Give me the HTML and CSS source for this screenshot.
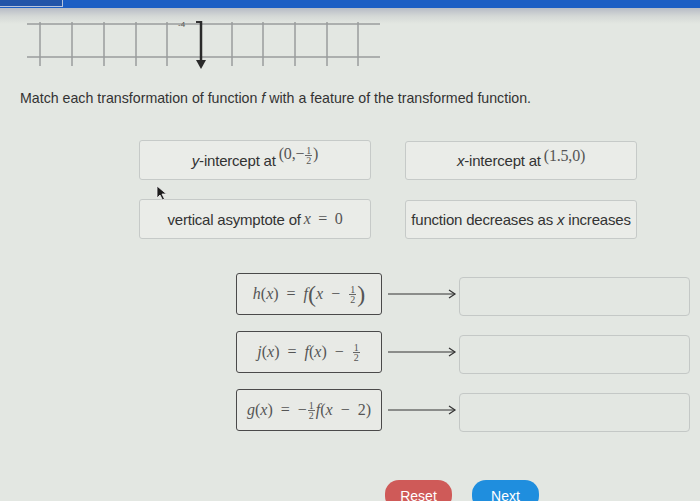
FILE: index.html
```html
<!DOCTYPE html>
<html>
<head>
    <title>Match transformations</title>
    <meta charset="utf-8">
    <meta name="viewport" content="width=device-width, initial-scale=1.0">
    <link rel="stylesheet" href="styles.css">
</head>
<body>

    <header class="topbar">
        <div class="tab"></div>
    </header>

    <div class="graph-area">
        <!-- part of the graph above the question, scrolled off -->
        <svg class="graph" width="400" height="50" viewBox="0 0 400 50">
            <g stroke="#9a9c9c" stroke-width="1.5">
                <line x1="27" y1="4" x2="380" y2="4"/>
                <line x1="27" y1="37" x2="380" y2="37"/>
                <line x1="40" y1="2" x2="40" y2="46"/>
                <line x1="72" y1="2" x2="72" y2="46"/>
                <line x1="104" y1="2" x2="104" y2="46"/>
                <line x1="136" y1="2" x2="136" y2="46"/>
                <line x1="167" y1="2" x2="167" y2="46"/>
                <line x1="232" y1="2" x2="232" y2="46"/>
                <line x1="263" y1="2" x2="263" y2="46"/>
                <line x1="295" y1="2" x2="295" y2="46"/>
                <line x1="327" y1="2" x2="327" y2="46"/>
                <line x1="358" y1="2" x2="358" y2="46"/>
            </g>
            <text x="178" y="7" font-size="8" fill="#555" font-family="Liberation Sans, sans-serif">-4</text>
            <line x1="196" y1="2" x2="201" y2="2" stroke="#333" stroke-width="2"/>
            <line x1="201" y1="1" x2="201" y2="42" stroke="#2a2a2a" stroke-width="2.5"/>
            <path d="M196 40 L201 49 L206 40 Z" fill="#2a2a2a"/>
        </svg>
    </div>

    <main class="question">
        <p class="prompt">Match each transformation of function <i>f</i> with a feature of the transformed function.</p>

        <section class="choices">
            <div class="card">
                <span><i>y</i>-intercept at</span>
                <span class="math tuple">(0,−<span class="frac"><span>1</span><span>2</span></span>)</span>
            </div>
            <div class="card">
                <span><i>x</i>-intercept at</span>
                <span class="math tuple">(1.5,0)</span>
            </div>
            <div class="card">
                <span>vertical asymptote of</span>
                <span class="math"><i>x</i>&nbsp; = &nbsp;0</span>
            </div>
            <div class="card">
                <span>function decreases as <i>x</i> increases</span>
            </div>
            <svg class="cursor" width="12" height="16" viewBox="0 0 12 16">
                <path d="M1 1 L1 13 L4 10 L6.5 15 L8.5 14 L6 9 L10.5 9 Z" fill="#1c1c1c" stroke="#f2f2f2" stroke-width="0.8"/>
            </svg>
        </section>

        <section class="matches">
            <div class="row">
                <div class="source math">
                    <i>h</i>(<i>x</i>)&nbsp; = &nbsp;<i>f</i><span class="big">(</span><i>x</i>&nbsp; − &nbsp;<span class="frac"><span>1</span><span>2</span></span><span class="big">)</span>
                </div>
                <svg class="link" width="70" height="12" viewBox="0 0 70 12">
                    <line x1="0" y1="6" x2="67" y2="6" stroke="#333" stroke-width="1"/>
                    <path d="M61 2 L67 6 L61 10" fill="none" stroke="#333" stroke-width="1.2"/>
                </svg>
                <div class="target"></div>
            </div>
            <div class="row">
                <div class="source math">
                    <i>j</i>(<i>x</i>)&nbsp; = &nbsp;<i>f</i>(<i>x</i>)&nbsp; − &nbsp;<span class="frac"><span>1</span><span>2</span></span>
                </div>
                <svg class="link" width="70" height="12" viewBox="0 0 70 12">
                    <line x1="0" y1="6" x2="67" y2="6" stroke="#333" stroke-width="1"/>
                    <path d="M61 2 L67 6 L61 10" fill="none" stroke="#333" stroke-width="1.2"/>
                </svg>
                <div class="target"></div>
            </div>
            <div class="row">
                <div class="source math">
                    <i>g</i>(<i>x</i>)&nbsp; = &nbsp;−<span class="frac"><span>1</span><span>2</span></span><i>f</i>(<i>x</i>&nbsp; − &nbsp;2)
                </div>
                <svg class="link" width="70" height="12" viewBox="0 0 70 12">
                    <line x1="0" y1="6" x2="67" y2="6" stroke="#333" stroke-width="1"/>
                    <path d="M61 2 L67 6 L61 10" fill="none" stroke="#333" stroke-width="1.2"/>
                </svg>
                <div class="target"></div>
            </div>
        </section>

        <div class="buttons">
            <button class="btn reset">Reset</button>
            <button class="btn next">Next</button>
        </div>
    </main>

</body>
</html>
```

FILE: styles.css
```css
* {
    box-sizing: border-box;
}

body {
    margin: 0;
    background-color: #e3e7e2;
    font-family: "Liberation Sans", Arial, sans-serif;
    color: #333;
    overflow: hidden;
}

.topbar {
    height: 8px;
    background-color: #1c5ec4;
}

.tab {
    width: 63px;
    height: 7px;
    background-color: #2254a8;
    border-right: 1px solid #b8c4dc;
    border-bottom: 1px solid #b8c4dc;
}

.graph-area {
    height: 62px;
    padding-top: 12px;
    background: linear-gradient(#b7bcc6 0, #d4d8d6 8px, #e3e7e2 16px);
}

.graph {
    display: block;
}

.question {
    position: relative;
}

.prompt {
    margin: 19px 0 0 20px;
    font-size: 14.2px;
    line-height: 18px;
}

.math {
    font-family: "Liberation Serif", "Times New Roman", serif;
    color: #555;
}

.frac {
    display: inline-flex;
    flex-direction: column;
    align-items: center;
    font-size: 10px;
    line-height: 9px;
    vertical-align: middle;
    margin: 0 1px;
}

.frac span:first-child {
    border-bottom: 1px solid #666;
    padding: 0 1px;
}

.choices {
    position: relative;
    display: grid;
    grid-template-columns: 232px 232px;
    grid-auto-rows: 40px;
    column-gap: 34px;
    row-gap: 19px;
    margin: 33px 0 0 139px;
}

.card {
    display: flex;
    align-items: center;
    justify-content: center;
    gap: 3px;
    background-color: #eaece8;
    border: 1px solid #c6cac8;
    border-radius: 3px;
    font-size: 15px;
    letter-spacing: -0.2px;
    white-space: nowrap;
}

.card .math {
    font-size: 16px;
}

.tuple {
    position: relative;
    top: -5px;
}

.card:nth-child(2), .card:nth-child(4) {
    margin-top: 1px;
}

.cursor {
    position: absolute;
    left: 17px;
    top: 45px;
}

.matches {
    display: flex;
    flex-direction: column;
    gap: 15px;
    margin: 34px 0 0 236px;
}

.row {
    display: flex;
    align-items: flex-start;
}

.source {
    width: 146px;
    height: 42px;
    display: flex;
    align-items: center;
    justify-content: center;
    border: 1.5px solid #4a4a4a;
    border-radius: 3px;
    background-color: #e8eae6;
    font-size: 16px;
    white-space: nowrap;
}

.big {
    font-size: 24px;
    line-height: 20px;
    font-weight: 300;
}

.link {
    margin: 15px 1px 0 6px;
}

.target {
    width: 231px;
    height: 39px;
    margin-top: 4px;
    border: 1px solid #c4c8c6;
    border-radius: 4px;
}

.buttons {
    display: flex;
    gap: 20px;
    margin: 48px 0 0 385px;
}

.btn {
    border: none;
    border-radius: 14px;
    color: white;
    font-family: "Liberation Sans", Arial, sans-serif;
    font-size: 14px;
    height: 30px;
    width: 67px;
    padding: 2px 0 0 0;
    text-align: center;
}

.reset {
    background-color: #cf5a58;
}

.next {
    background-color: #1f8ede;
}
```
